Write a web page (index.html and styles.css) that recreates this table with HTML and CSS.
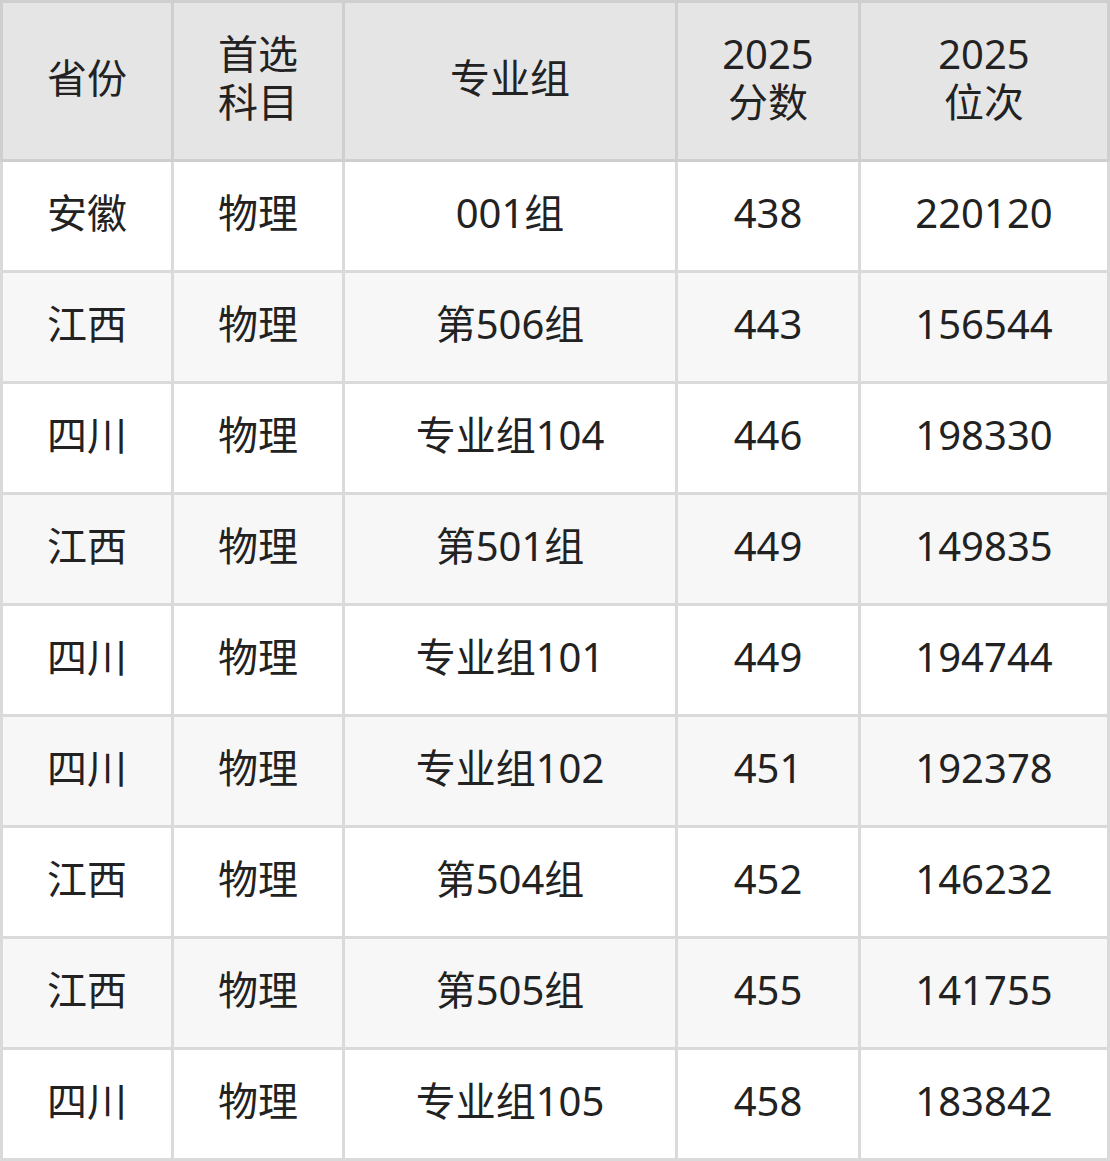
FILE: index.html
```html
<!DOCTYPE html>
<html lang="zh">
<head>
<meta charset="utf-8">
<link rel="stylesheet" href="styles.css">
</head>
<body>
<table class="score-table">
  <thead>
    <tr>
      <th class="c1">省份</th>
      <th class="c2">首选<br>科目</th>
      <th class="c3">专业组</th>
      <th class="c4">2025<br>分数</th>
      <th class="c5">2025<br>位次</th>
    </tr>
  </thead>
  <tbody>
    <tr><td>安徽</td><td>物理</td><td>001组</td><td>438</td><td>220120</td></tr>
    <tr><td>江西</td><td>物理</td><td>第506组</td><td>443</td><td>156544</td></tr>
    <tr><td>四川</td><td>物理</td><td>专业组104</td><td>446</td><td>198330</td></tr>
    <tr><td>江西</td><td>物理</td><td>第501组</td><td>449</td><td>149835</td></tr>
    <tr><td>四川</td><td>物理</td><td>专业组101</td><td>449</td><td>194744</td></tr>
    <tr><td>四川</td><td>物理</td><td>专业组102</td><td>451</td><td>192378</td></tr>
    <tr><td>江西</td><td>物理</td><td>第504组</td><td>452</td><td>146232</td></tr>
    <tr><td>江西</td><td>物理</td><td>第505组</td><td>455</td><td>141755</td></tr>
    <tr><td>四川</td><td>物理</td><td>专业组105</td><td>458</td><td>183842</td></tr>
  </tbody>
</table>
</body>
</html>
```
FILE: styles.css
```css
html, body {
  margin: 0;
  padding: 0;
  background: #ffffff;
}
.score-table {
  width: 1110px;
  table-layout: fixed;
  border-collapse: separate;
  border-spacing: 0;
  font-family: "Noto Sans", "Noto Sans CJK SC", sans-serif;
  font-size: 40px;
  color: #222222;
}
.score-table th,
.score-table td {
  box-sizing: border-box;
  padding: 0 0 7px 0;
  text-align: center;
  vertical-align: middle;
  border-right: 3px solid #dadada;
  border-bottom: 3px solid #dadada;
}
.score-table th:first-child,
.score-table td:first-child {
  border-left: 3px solid #dadada;
}
.score-table th {
  height: 162px;
  background: #e5e5e5;
  font-weight: normal;
  line-height: 48px;
  border-top: 3px solid #cfcfcf;
  border-right-color: #cfcfcf;
  border-bottom-color: #cfcfcf;
}
.score-table th:first-child {
  border-left-color: #cfcfcf;
}
.score-table td {
  height: 111px;
  line-height: 48px;
}
.score-table tbody tr:nth-child(even) td {
  background: #f7f7f7;
}
.c1 { width: 174px; }
.c2 { width: 171px; }
.c3 { width: 333px; }
.c4 { width: 183px; }
.c5 { width: 249px; }
```
